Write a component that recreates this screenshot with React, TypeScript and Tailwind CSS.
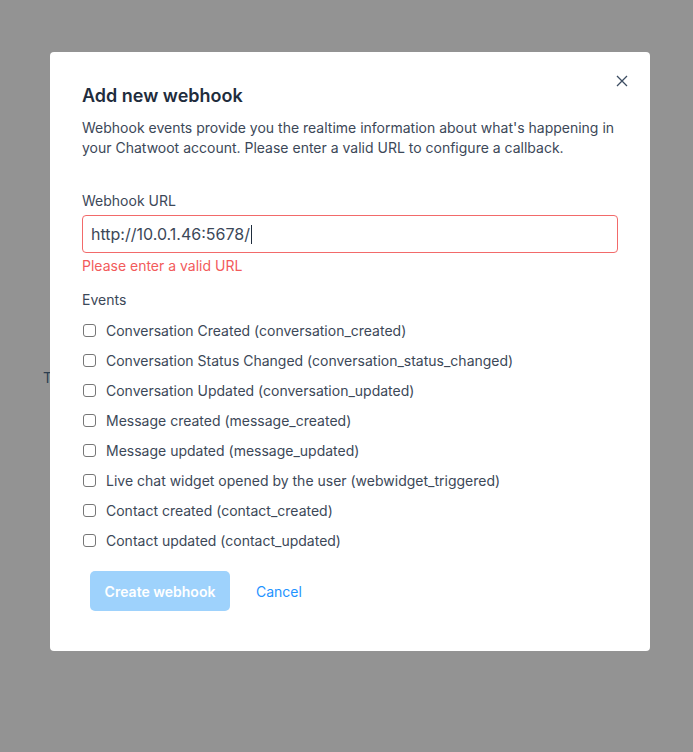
const EVENTS = [
  "Conversation Created (conversation_created)",
  "Conversation Status Changed (conversation_status_changed)",
  "Conversation Updated (conversation_updated)",
  "Message created (message_created)",
  "Message updated (message_updated)",
  "Live chat widget opened by the user (webwidget_triggered)",
  "Contact created (contact_created)",
  "Contact updated (contact_updated)",
];

export default function App() {
  return (
    <div
      className="relative h-[752px] w-full overflow-hidden bg-[#939393]"
      style={{ fontFamily: "Inter, 'Noto Sans', sans-serif" }}
    >
      {/* page behind the overlay */}
      <div className="pl-[43px] pt-[367px] text-[14px] text-[#2c3e50]">Third party</div>

      <div className="absolute left-[50px] top-[52px] w-[600px] h-[599px] rounded-[4px] bg-white px-[32px] pt-[30px]">
        <button className="absolute right-[20px] top-[21px] p-[1px] text-[#3c4d62]">
          <svg width="14" height="14" viewBox="0 0 14 14" fill="none" stroke="currentColor" strokeWidth="1.3">
            <path d="M2 2L12 12M12 2L2 12" />
          </svg>
        </button>

        <h2 className="text-[18px] leading-[27px] font-semibold text-[#1f2d3d]">Add new webhook</h2>
        <p className="mt-[9px] text-[14px] leading-[20px] text-[#3c4858]">
          Webhook events provide you the realtime information about what's happening in your Chatwoot account. Please enter a valid URL to configure a callback.
        </p>

        <label className="mt-[33px] block text-[14px] leading-[20px] text-[#3c4858]">Webhook URL</label>
        <div className="mt-[4px] flex h-[38px] items-center rounded-[4px] border border-[#f26a6a] px-[8px] text-[16px] text-[#3c4858]">
          http://10.0.1.46:5678/<span className="ml-[1px] inline-block h-[19px] w-[1px] bg-[#1f2d3d]" />
        </div>
        <p className="mt-[3px] text-[14px] leading-[20px] text-[#f25b5b]">Please enter a valid URL</p>

        <p className="mt-[14px] text-[14px] leading-[20px] text-[#3c4858]">Events</p>
        <div className="mt-[5px] flex flex-col">
          {EVENTS.map(e => (
            <label key={e} className="flex h-[30px] items-center gap-[10px] text-[14px] text-[#3c4858]">
              <input
                type="checkbox"
                className="ml-[1px] h-[13px] w-[13px] appearance-none rounded-[3px] border border-[#767676] bg-white"
              />
              <span>{e}</span>
            </label>
          ))}
        </div>

        <div className="mt-[16px] flex items-center gap-[26px] pl-[8px]">
          <button className="h-[40px] w-[140px] rounded-[5px] bg-[#9ed2fc] text-[14px] font-semibold text-white">
            Create webhook
          </button>
          <button className="text-[14px] text-[#1f93ff]">Cancel</button>
        </div>
      </div>
    </div>
  );
}
